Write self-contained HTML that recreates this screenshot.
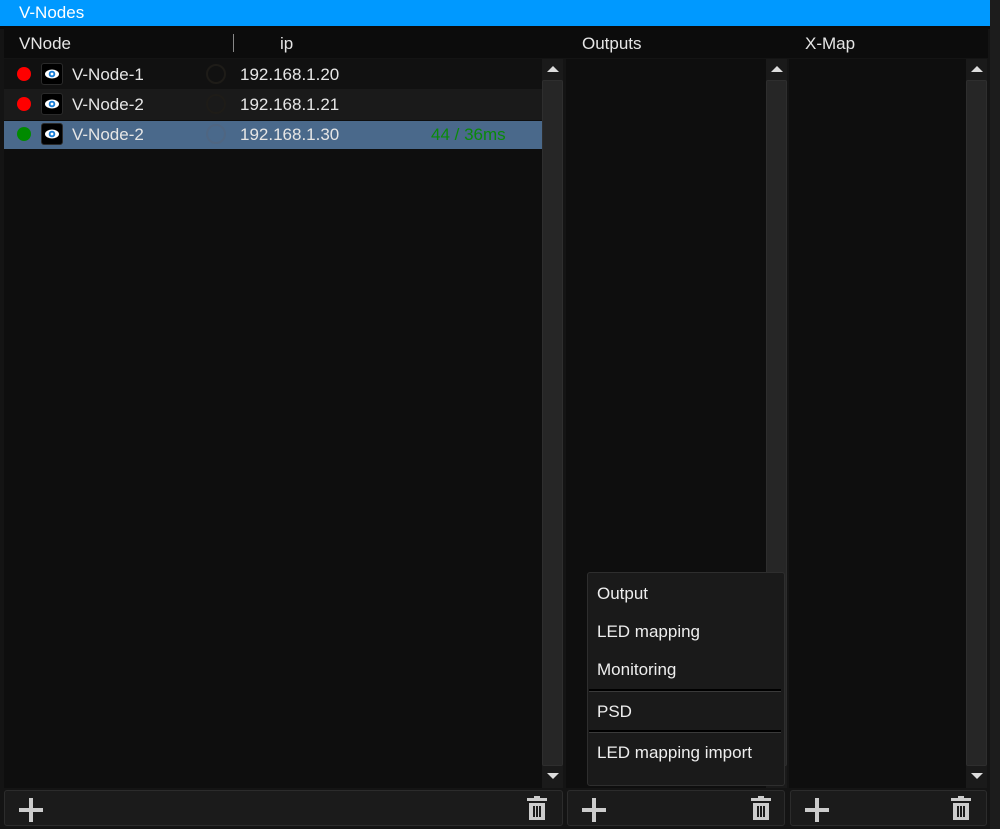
<!DOCTYPE html><html><head><style>
body{margin:0;width:1000px;height:829px;background:#141414;position:relative;overflow:hidden;font-family:"Liberation Sans",sans-serif;color:#e6e6e6;font-size:16px}
.a{position:absolute}
.sb{position:absolute;width:21px;background:#1a1a1a}
.tr{position:absolute;left:0;right:0;background:#262626;border:1px solid #2e2e2e;border-radius:2px}
.up{position:absolute;left:5px;width:0;height:0;border-left:6px solid transparent;border-right:6px solid transparent;border-bottom:6px solid #ddd}
.dn{position:absolute;left:5px;width:0;height:0;border-left:6px solid transparent;border-right:6px solid transparent;border-top:6px solid #ddd}
.btn{position:absolute;top:790px;height:36px;background:#1b1b1b;border:1px solid #2c2c2c;border-radius:3px;box-sizing:border-box}
.dot{position:absolute;left:17px;width:14px;height:14px;border-radius:50%}
.eye{position:absolute;left:41px;width:22px;height:22px;background:#000;border-radius:3px;border:1px solid #2a2a2a;box-sizing:border-box;padding:1px}
.ring{position:absolute;left:206px;width:20px;height:20px;border-radius:50%;border:2px solid #1e1c18;box-sizing:border-box}
.mi{position:absolute;left:597px;font-size:17px;color:#eee}
</style></head><body>
<div class="a" style="left:0;top:0;width:990px;height:26px;background:#0099ff"></div>
<div class="a" style="left:19px;top:3px;font-size:17px;color:#fff">V-Nodes</div>
<div class="a" style="left:0;top:26px;width:990px;height:3px;background:#0a0a0a"></div>
<div class="a" style="left:990px;top:0;width:10px;height:829px;background:#1c1c1c"></div>
<div class="a" style="left:4px;top:28px;width:984px;height:30px;background:#0c0c0c"></div>
<div class="a" style="left:19px;top:34px;font-size:17px">VNode</div>
<div class="a" style="left:233px;top:34px;width:1px;height:18px;background:#888"></div>
<div class="a" style="left:280px;top:34px;font-size:17px">ip</div>
<div class="a" style="left:582px;top:34px;font-size:17px">Outputs</div>
<div class="a" style="left:805px;top:34px;font-size:17px">X-Map</div>
<div class="a" style="left:4px;top:59px;width:538px;height:729px;background:#0e0e0e"></div>
<div class="a" style="left:566px;top:59px;width:200px;height:729px;background:#0e0e0e"></div>
<div class="a" style="left:789px;top:59px;width:177px;height:729px;background:#0e0e0e"></div>
<div class="a" style="left:4px;top:59px;width:538px;height:30px;background:#111"></div>
<div class="a" style="left:4px;top:89px;width:538px;height:31px;background:#1a1a1a"></div>
<div class="a" style="left:4px;top:121px;width:538px;height:28px;background:#4a698b"></div>
<div class="dot" style="top:67px;background:#ff0000"></div>
<div class="dot" style="top:97px;background:#ff0000"></div>
<div class="dot" style="top:127px;background:#008a00"></div>
<div class="eye" style="top:63px"><svg width="18" height="18" viewBox="0 0 18 18"><ellipse cx="9" cy="9" rx="7" ry="4.5" fill="#fff"/><circle cx="9" cy="9" r="3.3" fill="#1a7fd8"/><circle cx="9" cy="9" r="1.4" fill="#fff"/></svg></div>
<div class="eye" style="top:93px"><svg width="18" height="18" viewBox="0 0 18 18"><ellipse cx="9" cy="9" rx="7" ry="4.5" fill="#fff"/><circle cx="9" cy="9" r="3.3" fill="#1a7fd8"/><circle cx="9" cy="9" r="1.4" fill="#fff"/></svg></div>
<div class="eye" style="top:123px"><svg width="18" height="18" viewBox="0 0 18 18"><ellipse cx="9" cy="9" rx="7" ry="4.5" fill="#fff"/><circle cx="9" cy="9" r="3.3" fill="#1a7fd8"/><circle cx="9" cy="9" r="1.4" fill="#fff"/></svg></div>
<div class="a" style="left:72px;top:65px;font-size:17px">V-Node-1</div>
<div class="a" style="left:72px;top:95px;font-size:17px">V-Node-2</div>
<div class="a" style="left:72px;top:125px;font-size:17px">V-Node-2</div>
<div class="ring" style="top:64px"></div><div class="ring" style="top:94px"></div><div class="ring" style="top:124px;border-color:#4f6682"></div>
<div class="a" style="left:240px;top:65px;font-size:17px">192.168.1.20</div>
<div class="a" style="left:240px;top:95px;font-size:17px">192.168.1.21</div>
<div class="a" style="left:240px;top:125px;font-size:17px">192.168.1.30</div>
<div class="a" style="left:431px;top:125px;font-size:17px;color:#0a8a0a">44 / 36ms</div>
<div class="sb" style="left:542px;top:59px;height:729px"><div class="up" style="top:7px"></div><div class="tr" style="top:21px;bottom:22px"></div><div class="dn" style="top:714px"></div></div>
<div class="sb" style="left:766px;top:59px;height:729px"><div class="up" style="top:7px"></div><div class="tr" style="top:21px;bottom:22px"></div><div class="dn" style="top:714px"></div></div>
<div class="sb" style="left:966px;top:59px;height:729px"><div class="up" style="top:7px"></div><div class="tr" style="top:21px;bottom:22px"></div><div class="dn" style="top:714px"></div></div>
<div class="btn" style="left:4px;width:559px"></div>
<div class="btn" style="left:567px;width:218px"></div>
<div class="btn" style="left:790px;width:197px"></div>
<svg class="a" style="left:18px;top:797px" width="26" height="26"><rect x="11" y="1" width="4" height="24" fill="#ccc"/><rect x="1" y="11" width="24" height="4" fill="#ccc"/></svg>
<svg class="a" style="left:581px;top:797px" width="26" height="26"><rect x="11" y="1" width="4" height="24" fill="#ccc"/><rect x="1" y="11" width="24" height="4" fill="#ccc"/></svg>
<svg class="a" style="left:804px;top:797px" width="26" height="26"><rect x="11" y="1" width="4" height="24" fill="#ccc"/><rect x="1" y="11" width="24" height="4" fill="#ccc"/></svg>
<svg class="a" style="left:526px;top:796px" width="22" height="26"><rect x="1" y="2" width="20" height="3" fill="#ccc"/><rect x="8" y="0" width="6" height="3" fill="#ccc"/><path d="M3 7h16v17H3z" fill="#ccc"/><rect x="7" y="10" width="2" height="11" fill="#1b1b1b"/><rect x="10" y="10" width="2" height="11" fill="#1b1b1b"/><rect x="13" y="10" width="2" height="11" fill="#1b1b1b"/></svg>
<svg class="a" style="left:750px;top:796px" width="22" height="26"><rect x="1" y="2" width="20" height="3" fill="#ccc"/><rect x="8" y="0" width="6" height="3" fill="#ccc"/><path d="M3 7h16v17H3z" fill="#ccc"/><rect x="7" y="10" width="2" height="11" fill="#1b1b1b"/><rect x="10" y="10" width="2" height="11" fill="#1b1b1b"/><rect x="13" y="10" width="2" height="11" fill="#1b1b1b"/></svg>
<svg class="a" style="left:950px;top:796px" width="22" height="26"><rect x="1" y="2" width="20" height="3" fill="#ccc"/><rect x="8" y="0" width="6" height="3" fill="#ccc"/><path d="M3 7h16v17H3z" fill="#ccc"/><rect x="7" y="10" width="2" height="11" fill="#1b1b1b"/><rect x="10" y="10" width="2" height="11" fill="#1b1b1b"/><rect x="13" y="10" width="2" height="11" fill="#1b1b1b"/></svg>
<div class="a" style="left:587px;top:572px;width:196px;height:212px;background:#1a1a1a;border:1px solid #2e2e2e;border-radius:3px"></div>
<div class="a" style="left:589px;top:689px;width:192px;height:2px;background:#000;border-bottom:1px solid #3a3a3a"></div>
<div class="a" style="left:589px;top:730px;width:192px;height:2px;background:#000;border-bottom:1px solid #3a3a3a"></div>
<div class="mi" style="top:584px">Output</div>
<div class="mi" style="top:622px">LED mapping</div>
<div class="mi" style="top:660px">Monitoring</div>
<div class="mi" style="top:702px">PSD</div>
<div class="mi" style="top:743px">LED mapping import</div>
</body></html>
